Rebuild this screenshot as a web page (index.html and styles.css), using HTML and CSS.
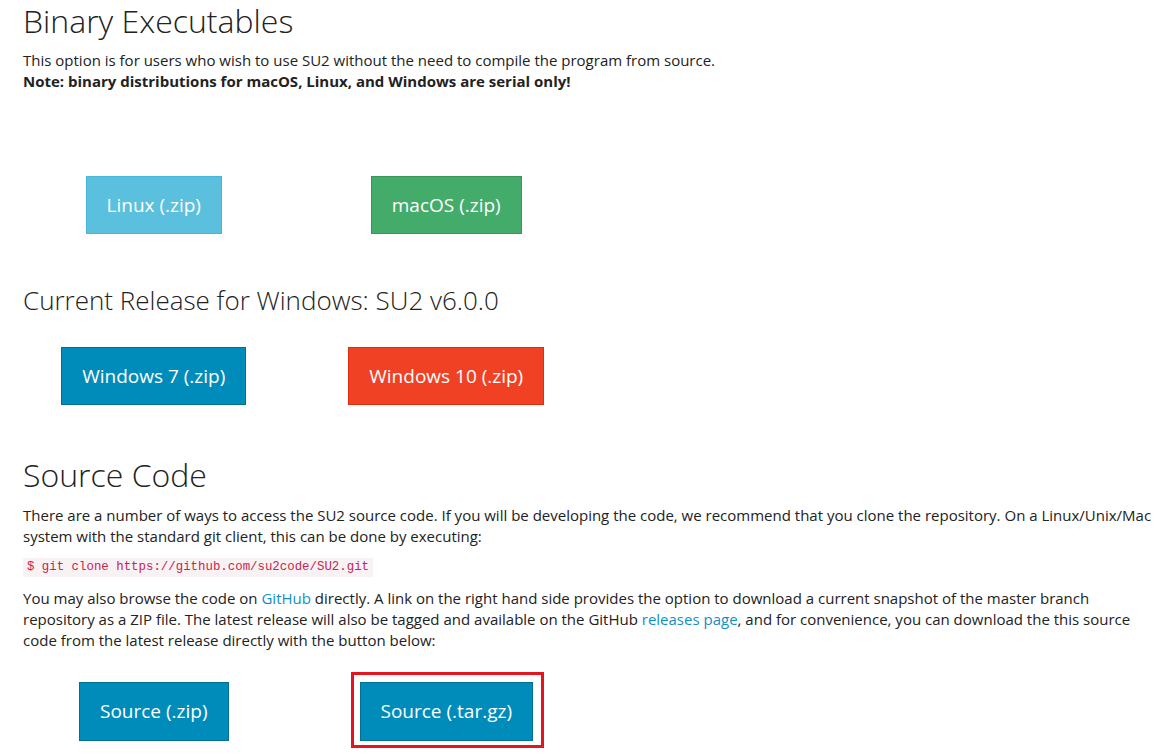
FILE: index.html
```html
<!DOCTYPE html>
<html lang="en">
<head>
<meta charset="utf-8">
<title>SU2 Download</title>
<link rel="stylesheet" href="styles.css">
</head>
<body>
<main class="page">
  <h1 class="title first">Binary Executables</h1>
  <p class="text">This option is for users who wish to use SU2 without the need to compile the program from source.<br><strong>Note: binary distributions for macOS, Linux, and Windows are serial only!</strong></p>

  <div class="btn-row row-binary">
    <div class="col"><a class="btn btn-info" href="#">Linux (.zip)</a></div>
    <div class="col"><a class="btn btn-success" href="#">macOS (.zip)</a></div>
  </div>

  <h2 class="title sub">Current Release for Windows: SU2 v6.0.0</h2>

  <div class="btn-row row-windows">
    <div class="col"><a class="btn btn-primary" href="#">Windows 7 (.zip)</a></div>
    <div class="col"><a class="btn btn-alert" href="#">Windows 10 (.zip)</a></div>
  </div>

  <h1 class="title source">Source Code</h1>
  <p class="text source-intro">There are a number of ways to access the SU2 source code. If you will be developing the code, we recommend that you clone the repository. On a Linux/Unix/Mac system with the standard git client, this can be done by executing:</p>
  <p class="code-line"><code>$ git clone https://github.com/su2code/SU2.git</code></p>
  <p class="text">You may also browse the code on <a class="link" href="#">GitHub</a> directly. A link on the right hand side provides the option to download a current snapshot of the master branch repository as a ZIP file. The latest release will also be tagged and available on the GitHub <a class="link" href="#">releases page</a>, and for convenience, you can download the this source code from the latest release directly with the button below:</p>

  <div class="btn-row row-source">
    <div class="col"><a class="btn btn-primary tall" href="#">Source (.zip)</a></div>
    <div class="col"><a class="btn btn-primary tall highlighted" href="#">Source (.tar.gz)</a></div>
  </div>
</main>
</body>
</html>
```

FILE: styles.css
```css
html, body {
  margin: 0;
  padding: 0;
  background: #ffffff;
}

body {
  font-family: "Open Sans", "Noto Sans", sans-serif;
  color: #222222;
  font-size: 15px;
  line-height: 21px;
}

.page {
  padding: 1px 5px 0 23px;
  overflow: hidden;
  height: 753px;
}

.title {
  font-family: "Open Sans", sans-serif;
  font-weight: 300;
  font-size: 32px;
  line-height: 40px;
  color: #222222;
  margin: 0;
}

.first {
  margin: 0 0 9px 0;
}

.sub {
  font-size: 26px;
  line-height: 32px;
  margin: 50px 0 31px 0;
}

.source {
  margin: 50px 0 10px 0;
}

.text {
  margin: 0;
}

.text strong {
  font-weight: 700;
}

.code-line {
  margin: 11px 0 11px 0;
  line-height: 19px;
  height: 19px;
}

.code-line code {
  display: inline-block;
  font-family: "Liberation Mono", "DejaVu Sans Mono", monospace;
  font-size: 12.4px;
  line-height: 15px;
  padding: 2px 4px;
  color: #c7254e;
  background: #f9f2f4;
  vertical-align: top;
}

.link {
  color: #138fc0;
  text-decoration: none;
}

.btn-row {
  display: grid;
  grid-template-columns: 292.5px 292.5px;
  margin-left: -15.5px;
  justify-items: center;
}

.row-binary {
  margin-top: 84px;
}

.row-source {
  margin-top: 31px;
}

.btn {
  display: inline-block;
  position: relative;
  font-size: 19px;
  line-height: 24px;
  padding: 16px 20px;
  border: 1px solid transparent;
  color: #ffffff;
  text-decoration: none;
  white-space: nowrap;
}

.btn.tall {
  padding-bottom: 17px;
}

.btn-info {
  background: #5bc0de;
  border-color: #46b8da;
}

.btn-success {
  background: #43ac6a;
  border-color: #3a945b;
}

.btn-primary {
  background: #008cba;
  border-color: #007095;
}

.btn-alert {
  background: #f04124;
  border-color: #de2d0f;
}

.highlighted::after {
  content: "";
  position: absolute;
  left: -10px;
  right: -12px;
  top: -11px;
  bottom: -8px;
  border: 3px solid #e3151f;
  pointer-events: none;
}
```
